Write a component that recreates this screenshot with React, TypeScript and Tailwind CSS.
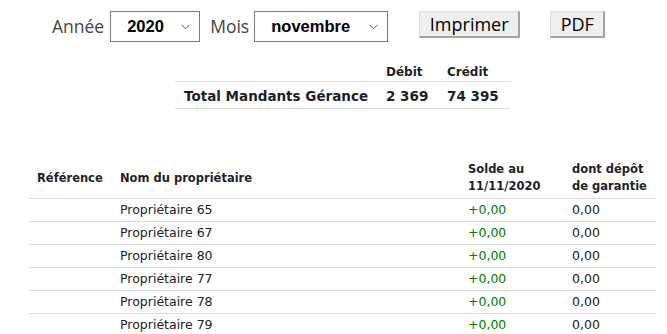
import React from "react";

function Chevron() {
  return (
    <svg width="9" height="6" viewBox="0 0 9 6" className="shrink-0">
      <path d="M0.5 0.8 L4.5 4.8 L8.5 0.8" fill="none" stroke="#555" strokeWidth="1" />
    </svg>
  );
}

function FakeSelect({ value, width, textPad }: { value: string; width: string; textPad: string }) {
  return (
    <div className={`${width} h-[31px] border border-[#7a7a7a] bg-white flex items-center justify-between pr-[9px]`}>
      <span className={`${textPad} font-bold text-[16.5px] text-black`} style={{ fontFamily: '"Liberation Sans", Arial, sans-serif' }}>
        {value}
      </span>
      <Chevron />
    </div>
  );
}

function Btn({ label, width }: { label: string; width: string }) {
  return (
    <div
      className={`${width} h-[27px] bg-[#efefef] border-t border-l border-[#dcdcdc] border-b-2 border-r-2 border-b-[#a3a3a3] border-r-[#a3a3a3] flex items-center justify-center text-[18px] text-black leading-none`}
    >
      {label}
    </div>
  );
}

const rows = [65, 67, 80, 77, 78, 79];

export default function App() {
  return (
    <div className="w-[667px] h-[334px] overflow-hidden bg-white text-[#222]">
      <div
        className="flex items-center pt-[11px] pl-[52px]"
        style={{ fontFamily: '"Open Sans", "Noto Sans", sans-serif' }}
      >
        <span className="text-[17.5px] text-[#444] mr-[6px] leading-none">Année</span>
        <FakeSelect value="2020" width="w-[90px]" textPad="pl-[16px]" />
        <span className="text-[17.5px] text-[#444] ml-[10px] mr-[5px] leading-none">Mois</span>
        <FakeSelect value="novembre" width="w-[134px]" textPad="pl-[16px]" />
        <div className="ml-[31px] self-start">
          <Btn label="Imprimer" width="w-[101px]" />
        </div>
        <div className="ml-[30px] self-start">
          <Btn label="PDF" width="w-[55px]" />
        </div>
      </div>

      <div
        className="ml-[175px] mt-[20px] w-[335px]"
        style={{ fontFamily: '"DejaVu Sans", Verdana, sans-serif' }}
      >
        <div className="grid grid-cols-[211px_61px_63px] h-[20px] items-center border-b border-[#dddddd] font-bold text-[12px] text-[#1f1f2a]">
          <div />
          <div>Débit</div>
          <div>Crédit</div>
        </div>
        <div className="grid grid-cols-[211px_61px_63px] h-[27px] items-center pt-[2px] border-b border-[#dddddd] font-bold text-[13.5px] text-[#1f1f2a]">
          <div className="pl-[9px]">Total Mandants Gérance</div>
          <div>2 369</div>
          <div>74 395</div>
        </div>
      </div>

      <div
        className="ml-[29px] mt-[52px] w-[627px]"
        style={{ fontFamily: '"DejaVu Sans", Verdana, sans-serif' }}
      >
        <div className="grid grid-cols-[83px_348px_104px_92px] items-center pb-[3px] font-bold text-[11.5px] leading-[17px] text-[#1f1f2a]">
          <div className="pl-[8px]">Référence</div>
          <div className="pl-[8px]">Nom du propriétaire</div>
          <div className="pl-[8px]">
            Solde au
            <br />
            11/11/2020
          </div>
          <div className="pl-[8px]">
            dont dépôt
            <br />
            de garantie
          </div>
        </div>
        {rows.map((r) => (
          <div
            key={r}
            className="grid grid-cols-[83px_348px_104px_92px] items-center h-[23px] border-t border-[#dddddd] text-[12.5px] text-[#222]"
          >
            <div />
            <div className="pl-[8px]">Propriétaire {r}</div>
            <div className="pl-[8px] text-[#008000]">+0,00</div>
            <div className="pl-[8px]">0,00</div>
          </div>
        ))}
      </div>
    </div>
  );
}
